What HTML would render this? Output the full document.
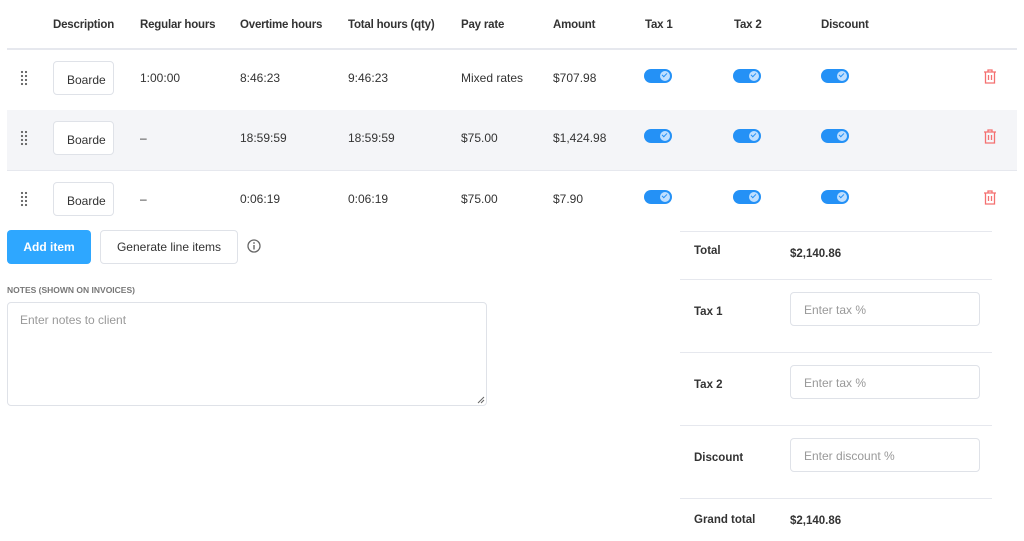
<!DOCTYPE html>
<html><head><style>
*{box-sizing:border-box;margin:0;padding:0}
body{width:1024px;height:541px;background:#fff;font-family:"Liberation Sans",sans-serif;font-size:12px;color:#333;position:relative;overflow:hidden}
.a{position:absolute}
.h{font-weight:bold;color:#333;font-size:11.5px;top:19px;letter-spacing:-0.2px}
.row{position:absolute;left:7px;width:1010px;height:61px;border-bottom:1px solid #e6e8ee}
.cell{position:absolute;top:21px}
.inp{position:absolute;left:46px;top:11px;width:61px;height:34px;border:1px solid #dfe2e8;border-radius:4px;background:#fff;padding:11px 0 0 13px;overflow:hidden;white-space:nowrap}
.tog{position:absolute;top:19px;width:28px;height:14px;border-radius:7px;background:#2491f6}
.tog::after{content:"";position:absolute;right:2px;top:2px;width:10px;height:10px;border-radius:50%;background:#bfdfff}
.tog::before{content:"";position:absolute;right:5px;top:4px;width:4px;height:2px;border-left:1.2px solid #2491f6;border-bottom:1.2px solid #2491f6;transform:rotate(-45deg);z-index:1}
.drag{position:absolute;left:13px;top:20px;width:8px;height:16px;background:radial-gradient(circle,#666 1px,transparent 1.3px) 0 0/4px 4px}
.lbl{position:absolute;left:694px;font-weight:bold;font-size:11.5px;color:#333}
.line{position:absolute;left:680px;width:312px;height:1px;background:#e6e8ee}
.tin{position:absolute;left:790px;width:190px;height:34px;border:1px solid #dfe2e8;border-radius:4px;color:#999;padding:10px 0 0 13px}
</style></head><body>
<div class="a" style="left:7px;top:48px;width:1010px;height:2px;background:#e6e8ee"></div>
<div class="a h" style="left:53px">Description</div>
<div class="a h" style="left:140px">Regular hours</div>
<div class="a h" style="left:240px">Overtime hours</div>
<div class="a h" style="left:348px">Total hours (qty)</div>
<div class="a h" style="left:461px">Pay rate</div>
<div class="a h" style="left:553px">Amount</div>
<div class="a h" style="left:645px">Tax 1</div>
<div class="a h" style="left:734px">Tax 2</div>
<div class="a h" style="left:821px">Discount</div>

<div class="row" style="top:50px">
<div class="drag"></div><div class="inp">Boarde</div>
<div class="cell" style="left:133px">1:00:00</div><div class="cell" style="left:233px">8:46:23</div><div class="cell" style="left:341px">9:46:23</div><div class="cell" style="left:454px">Mixed rates</div><div class="cell" style="left:546px">$707.98</div>
<div class="tog" style="left:637px"></div><div class="tog" style="left:726px"></div><div class="tog" style="left:814px"></div>
<svg class="a" style="left:976px;top:19px" width="14" height="15" viewBox="0 0 14 15" fill="none" stroke="#f47070" stroke-width="1.3"><path d="M1 3h12M5 3V1h4v2M2.5 3v11h9V3M5.5 6v5M8.5 6v5"/></svg>
</div>
<div class="row" style="top:110px;background:#f4f5f8">
<div class="drag"></div><div class="inp">Boarde</div>
<div class="cell" style="left:133px">–</div><div class="cell" style="left:233px">18:59:59</div><div class="cell" style="left:341px">18:59:59</div><div class="cell" style="left:454px">$75.00</div><div class="cell" style="left:546px">$1,424.98</div>
<div class="tog" style="left:637px"></div><div class="tog" style="left:726px"></div><div class="tog" style="left:814px"></div>
<svg class="a" style="left:976px;top:19px" width="14" height="15" viewBox="0 0 14 15" fill="none" stroke="#f47070" stroke-width="1.3"><path d="M1 3h12M5 3V1h4v2M2.5 3v11h9V3M5.5 6v5M8.5 6v5"/></svg>
</div>
<div class="row" style="top:171px;border-bottom:none">
<div class="drag"></div><div class="inp">Boarde</div>
<div class="cell" style="left:133px">–</div><div class="cell" style="left:233px">0:06:19</div><div class="cell" style="left:341px">0:06:19</div><div class="cell" style="left:454px">$75.00</div><div class="cell" style="left:546px">$7.90</div>
<div class="tog" style="left:637px"></div><div class="tog" style="left:726px"></div><div class="tog" style="left:814px"></div>
<svg class="a" style="left:976px;top:19px" width="14" height="15" viewBox="0 0 14 15" fill="none" stroke="#f47070" stroke-width="1.3"><path d="M1 3h12M5 3V1h4v2M2.5 3v11h9V3M5.5 6v5M8.5 6v5"/></svg>
</div>

<div class="a" style="left:7px;top:230px;width:84px;height:34px;background:#2ea7ff;border-radius:4px;color:#fff;font-weight:bold;text-align:center;line-height:34px">Add item</div>
<div class="a" style="left:100px;top:230px;width:138px;height:34px;border:1px solid #dfe2e8;border-radius:4px;text-align:center;line-height:32px;color:#333">Generate line items</div>
<svg class="a" style="left:247px;top:239px" width="14" height="14" viewBox="0 0 14 14"><circle cx="7" cy="7" r="6" fill="none" stroke="#666" stroke-width="1.3"/><rect x="6.3" y="6" width="1.4" height="4.5" fill="#666"/><circle cx="7" cy="4" r="0.9" fill="#666"/></svg>
<div class="a" style="left:7px;top:285px;font-size:8.5px;font-weight:bold;color:#777">NOTES (SHOWN ON INVOICES)</div>
<div class="a" style="left:7px;top:302px;width:480px;height:104px;border:1px solid #dfe2e8;border-radius:4px;color:#999;padding:10px 12px">Enter notes to client</div>
<svg class="a" style="left:477px;top:396px" width="8" height="8" viewBox="0 0 8 8" stroke="#666" stroke-width="1"><path d="M1 7L7 1M4 7L7 4"/></svg>

<div class="line" style="top:231px"></div>
<div class="lbl" style="top:245px">Total</div><div class="a" style="left:790px;top:248px;font-weight:bold;font-size:11.5px">$2,140.86</div>
<div class="line" style="top:279px"></div>
<div class="lbl" style="top:306px">Tax 1</div><div class="tin" style="top:292px">Enter tax %</div>
<div class="line" style="top:352px"></div>
<div class="lbl" style="top:379px">Tax 2</div><div class="tin" style="top:365px">Enter tax %</div>
<div class="line" style="top:425px"></div>
<div class="lbl" style="top:452px">Discount</div><div class="tin" style="top:438px">Enter discount %</div>
<div class="line" style="top:498px"></div>
<div class="lbl" style="top:514px">Grand total</div><div class="a" style="left:790px;top:515px;font-weight:bold;font-size:11.5px">$2,140.86</div>
</body></html>
